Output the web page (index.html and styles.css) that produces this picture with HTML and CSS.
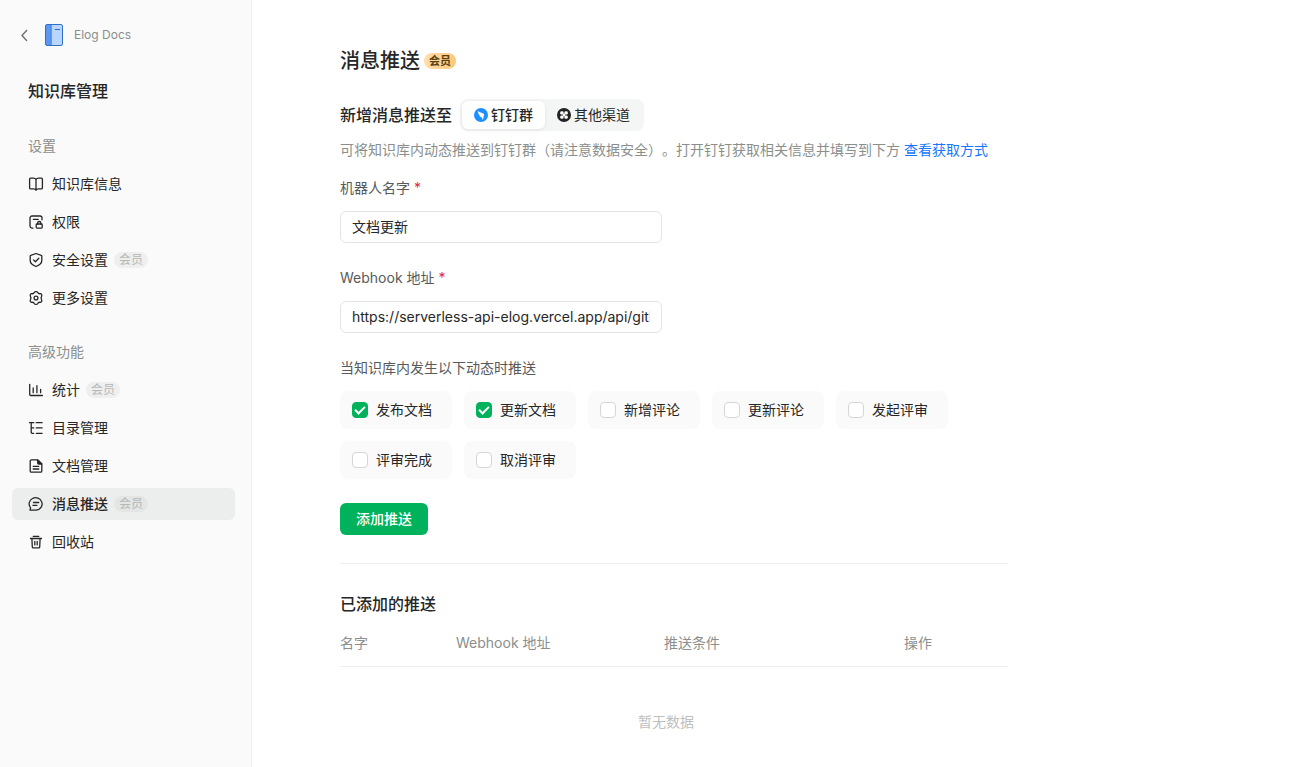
FILE: index.html
```
<!DOCTYPE html>
<html lang="zh-CN">
<head>
<meta charset="utf-8">
<meta name="viewport" content="width=device-width, initial-scale=1">
<title>消息推送</title>
<link rel="stylesheet" href="styles.css">
</head>
<body>
<div class="app">
  <aside class="sidebar">
    <div class="crumb">
      <button class="back" type="button" aria-label="返回">
        <svg width="16" height="16" viewBox="0 0 16 16" fill="none" stroke="#6f7572" stroke-width="1.5" stroke-linecap="round" stroke-linejoin="round"><path d="M10.600 3.400 6 8.400l4.600 5"/></svg>
      </button>
      <svg class="book" width="20" height="24" viewBox="0 0 20 24"><rect x="1.500" y="1.500" width="17" height="21" rx="1.600" fill="#bbd6fc"/><path d="M3.100 1.500H7v21H3.100a1.600 1.600 0 0 1-1.600-1.600V3.100a1.600 1.600 0 0 1 1.600-1.600z" fill="#5c98f3"/><path d="M7.200 1.500v21" stroke="#3f7fd8"/><rect x="1.500" y="1.500" width="17" height="21" rx="1.600" fill="none" stroke="#2f6fca"/><path d="M11.200 6.500h4.500" stroke="#2f6fca" stroke-linecap="round"/></svg>
      <a class="crumb-link" href="#">Elog Docs</a>
    </div>
    <h2 class="side-title">知识库管理</h2>

    <nav class="group" aria-label="设置">
      <h3 class="group-title">设置</h3>
      <a class="item" href="#"><svg class="icon" viewBox="0 0 16 16"><path d="M8 3.600C7.500 2.500 6.500 2.100 5.400 2.100H2.600a1 1 0 0 0-1 1v8.800a1 1 0 0 0 1 1h3c1 0 1.900.3 2.400 1.300.5-1 1.400-1.300 2.400-1.300h3a1 1 0 0 0 1-1V3.100a1 1 0 0 0-1-1h-2.800C9.500 2.100 8.500 2.500 8 3.600zM8 3.600v10.400"/></svg>知识库信息</a>
      <a class="item" href="#"><svg class="icon" viewBox="0 0 16 16"><path d="M5 14.100H3.800A2 2 0 0 1 2 12.100V4a2 2 0 0 1 2-2h8a2 2 0 0 1 2 2v1.800M5.300 5.300h5"/><rect x="8.200" y="10" width="6" height="4.100" rx=".8"/><path d="M9.600 10V9.100a1.600 1.600 0 0 1 3.200 0v.9"/></svg>权限</a>
      <a class="item" href="#"><svg class="icon" viewBox="0 0 16 16"><path d="M8 1.500 13.200 3.300a.8.8 0 0 1 .6.800v4.300c0 2.900-2.800 4.900-5.800 6.100-3-1.200-5.800-3.200-5.800-6.100V4.100a.8.800 0 0 1 .6-.8z"/><path d="m5.500 7.900 1.900 1.900 3.400-3.500"/></svg>安全设置<span class="tag">会员</span></a>
      <a class="item" href="#"><svg class="icon" viewBox="0 0 16 16"><path d="M6.400 2.300C6.900 1.300 9.100 1.300 9.600 2.300c.5 1.200 1.300 1.600 2.500 1.400 1.200-.2 2.200 1.800 1.500 2.700-.8 1.100-.8 2.100 0 3.200.7.900-.3 2.900-1.500 2.700-1.200-.2-2 .2-2.500 1.400-.5 1-2.700 1-3.200 0-.5-1.200-1.300-1.600-2.500-1.400-1.200.2-2.200-1.800-1.500-2.700.8-1.100.8-2.100 0-3.200-.7-.9.300-2.900 1.500-2.700 1.200.2 2-.2 2.500-1.400z"/><circle cx="8" cy="8" r="1.900"/></svg>更多设置</a>
    </nav>

    <nav class="group" aria-label="高级功能">
      <h3 class="group-title">高级功能</h3>
      <a class="item" href="#"><svg class="icon" viewBox="0 0 16 16"><path d="M1.700 2.300v10.200a1 1 0 0 0 1 1h11.700M5.200 6v4.700M8.900 3.600v7.100M12.600 7.300v3.400"/></svg>统计<span class="tag">会员</span></a>
      <a class="item" href="#"><svg class="icon" viewBox="0 0 16 16"><path d="M1.500 2.700h4.300M3.200 2.700v9.600a1 1 0 0 0 1 1h1.500M3.200 7.900h2.500M8.300 2.700h5.800M8.300 7.900h5.800M8.300 13.300h5.800"/></svg>目录管理</a>
      <a class="item" href="#"><svg class="icon" viewBox="0 0 16 16"><path d="M9.700 1.900H3.400a1.200 1.200 0 0 0-1.200 1.200v9.800a1.200 1.200 0 0 0 1.200 1.200h9.200a1.200 1.200 0 0 0 1.200-1.200V6zM5.200 8.300h5.600M5.200 11h5.600"/><path d="M9.700 1.900V5a1 1 0 0 0 1 1h3.100z" fill="#262626"/></svg>文档管理</a>
      <a class="item active" href="#" aria-current="page"><svg class="icon" viewBox="0 0 16 16"><path d="M2 14.100 2.600 11.900A6.500 6.200 0 1 1 8.300 14.100zM5.500 6.500h5.200M4.900 9.300h4"/></svg>消息推送<span class="tag">会员</span></a>
      <a class="item" href="#"><svg class="icon" viewBox="0 0 16 16"><path d="M2.500 4.500h11M5.200 2.300h5.600M3.900 4.500l.4 8.400a1 1 0 0 0 1 1h5.400a1 1 0 0 0 1-1l.4-8.400M6.800 7.500v3.400M9.200 7.500v3.400"/></svg>回收站</a>
    </nav>
  </aside>

  <main class="main">
    <div class="content">
      <div class="page-head"><h1 class="page-title">消息推送</h1><span class="vip">会员</span></div>

      <div class="target">
        <h2 class="section-title">新增消息推送至</h2>
        <div class="segments">
          <button class="segment on" type="button" aria-pressed="true"><svg width="14" height="14" viewBox="0 0 14 14"><circle cx="7" cy="7" r="7" fill="#1e8fff"/><path d="M3.600 3.200c2.100.9 4.200 1.400 5.900 2.500.8.500.8 1.200.4 2l-.8 1.500h1L8 12l.2-2.100-.9-.1.500-.8c-1.300 0-2.100-.5-2.500-1.500l1 .1C5.100 7 4.400 6.300 4.200 5.300l1.100.3C4.200 4.900 3.700 4.200 3.600 3.200z" fill="#fff"/></svg>钉钉群</button>
          <button class="segment" type="button" aria-pressed="false"><svg width="14" height="14" viewBox="0 0 14 14"><circle cx="7" cy="7" r="7" fill="#222"/><g fill="#fff"><rect x="3.200" y="3.200" width="3.400" height="3.400" rx="1.400"/><rect x="7.400" y="3.200" width="3.400" height="3.400" rx="1.400"/><rect x="3.200" y="7.400" width="3.400" height="3.400" rx="1.400"/><rect x="7.400" y="7.400" width="3.400" height="3.400" rx="1.400"/><rect x="5.800" y="5.800" width="2.400" height="2.400"/></g></svg>其他渠道</button>
        </div>
      </div>
      <p class="desc">可将知识库内动态推送到钉钉群（请注意数据安全）。打开钉钉获取相关信息并填写到下方 <a class="link" href="#">查看获取方式</a></p>

      <form class="form">
        <div class="field">
          <label class="label" for="robot">机器人名字 <span class="required">*</span></label>
          <input class="input" id="robot" type="text" value="文档更新">
        </div>
        <div class="field">
          <label class="label" for="hook">Webhook 地址 <span class="required">*</span></label>
          <input class="input" id="hook" type="text" value="https://serverless-api-elog.vercel.app/api/github">
        </div>
        <fieldset class="events">
          <legend class="label legend">当知识库内发生以下动态时推送</legend>
          <div class="options">
            <label class="option"><input class="check" type="checkbox" checked>发布文档</label>
            <label class="option"><input class="check" type="checkbox" checked>更新文档</label>
            <label class="option"><input class="check" type="checkbox">新增评论</label>
            <label class="option"><input class="check" type="checkbox">更新评论</label>
            <label class="option"><input class="check" type="checkbox">发起评审</label>
            <label class="option"><input class="check" type="checkbox">评审完成</label>
            <label class="option"><input class="check" type="checkbox">取消评审</label>
          </div>
        </fieldset>
        <button class="submit" type="button">添加推送</button>
      </form>

      <section class="added">
        <h2 class="section-title">已添加的推送</h2>
        <table class="table">
          <colgroup><col class="col-name"><col class="col-hook"><col class="col-rule"><col class="col-action"></colgroup>
          <thead><tr><th>名字</th><th>Webhook 地址</th><th>推送条件</th><th>操作</th></tr></thead>
          <tbody><tr><td class="empty" colspan="4">暂无数据</td></tr></tbody>
        </table>
      </section>
    </div>
  </main>
</div>
</body>
</html>
```
FILE: styles.css
```
*, *::before, *::after { box-sizing: border-box; }

body {
  margin: 0;
  background: #fff;
  color: #262626;
  font-family: Inter, "Noto Sans CJK SC", sans-serif;
  font-size: 14px;
  line-height: 22px;
  text-spacing-trim: space-all;
}

h1, h2, h3, p { margin: 0; }
a { color: inherit; text-decoration: none; }
button, input { font: inherit; color: inherit; }
button { border: 0; background: none; padding: 0; cursor: pointer; }
svg { display: block; flex: none; }

.app { display: flex; min-height: 100vh; }

.sidebar {
  flex: 0 0 252px;
  padding: 23px 16px 16px 12px;
  background: #fafafa;
  border-right: 1px solid #f0f0f0;
}

.crumb { display: flex; align-items: center; padding-left: 4px; }
.book { margin: 0 10px 0 12px; }
.crumb-link { color: #8a8f8d; font-size: 12px; }
.side-title {
  margin: 32px 0;
  padding-left: 16px;
  font-size: 16px;
  font-weight: 500;
  line-height: 24px;
}

.group { display: flex; flex-direction: column; gap: 6px; margin-bottom: 27px; }
.group-title {
  margin-bottom: 5px;
  padding-left: 16px;
  color: #8a8f8d;
  font-size: 14px;
  font-weight: 400;
}
.item {
  display: flex;
  align-items: center;
  height: 32px;
  padding: 0 16px;
  border-radius: 6px;
}
.item.active { background: #eceeed; font-weight: 500; }
.icon {
  width: 16px;
  height: 16px;
  margin-right: 8px;
  fill: none;
  stroke: #262626;
  stroke-width: 1.3;
  stroke-linecap: round;
  stroke-linejoin: round;
}
.tag {
  margin-left: 6px;
  padding: 0 5px;
  border-radius: 8px;
  background: #efefef;
  color: #b4b8b6;
  font-size: 12px;
  font-weight: 400;
  line-height: 16px;
}
.active .tag { background: #e4e6e5; }

.main { flex: 1; min-width: 0; padding: 47px 88px 24px; }
.content { max-width: 668px; }

.page-head { display: flex; align-items: center; gap: 4px; }
.page-title { font-size: 20px; font-weight: 500; line-height: 28px; }
.vip {
  padding: 0 5px;
  border-radius: 8px;
  background: linear-gradient(90deg, #ffdfae, #fcc878);
  color: #5c4110;
  font-size: 11px;
  font-weight: 700;
  line-height: 16px;
}

.target { display: flex; align-items: center; gap: 8px; margin-top: 24px; }
.section-title { font-size: 16px; font-weight: 500; line-height: 24px; }
.segments { display: flex; padding: 2px; border-radius: 8px; background: #f4f5f5; }
.segment {
  display: flex;
  align-items: center;
  gap: 3px;
  height: 28px;
  padding: 0 12px;
  border-radius: 6px;
}
.segment.on {
  background: #fff;
  box-shadow: 0 1px 4px rgba(0, 0, 0, .08);
  font-weight: 500;
}

.desc { margin-top: 8px; color: #8a8f8d; }
.link { color: #1677ff; }

.form { margin-top: 16px; }
.field { margin-bottom: 24px; }
.label { display: block; margin-bottom: 12px; color: #585a5a; }
.required { color: #df2a3f; }
.input {
  display: block;
  width: 100%;
  max-width: 322px;
  height: 32px;
  padding: 0 11px 2px;
  border: 1px solid #e2e4e3;
  border-radius: 6px;
  background: #fff;
}

.events { margin: 0; padding: 0; border: 0; min-width: 0; }
.legend { padding: 0; }
.options { display: grid; grid-template-columns: repeat(auto-fill, 112px); gap: 12px; }
.option {
  display: flex;
  align-items: center;
  gap: 8px;
  height: 38px;
  padding: 0 12px;
  border-radius: 8px;
  background: #fafafa;
}
.check {
  display: grid;
  place-items: center;
  appearance: none;
  width: 16px;
  height: 16px;
  margin: 0;
  border: 1px solid #d4d6d5;
  border-radius: 4px;
  background: #fff;
}
.check:checked { border-color: #00b25b; background: #00b25b; }
.check:checked::after {
  content: "";
  width: 10px;
  height: 6px;
  margin-bottom: 2px;
  border: solid #fff;
  border-width: 0 0 2px 2px;
  transform: rotate(-45deg);
}

.submit {
  margin-top: 24px;
  height: 32px;
  padding: 0 16px;
  border-radius: 6px;
  background: #00b25b;
  color: #fff;
  font-weight: 500;
}

.added { margin-top: 28px; padding-top: 28px; border-top: 1px solid #eee; }
.table { width: 100%; margin-top: 16px; border-collapse: collapse; table-layout: fixed; }
.table th {
  padding: 0 0 12px;
  border-bottom: 1px solid #eee;
  color: #8a8f8d;
  font-weight: 400;
  text-align: left;
}
.col-name { width: 116px; }
.col-hook { width: 208px; }
.col-rule { width: 240px; }
.table .empty { padding: 44px 16px 0 0; color: #bec0bf; text-align: center; }
```
